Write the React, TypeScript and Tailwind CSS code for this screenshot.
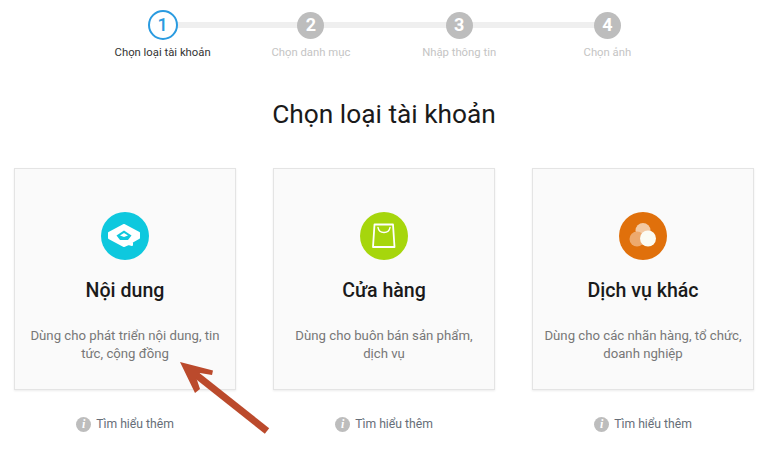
const steps = [
  { n: "1", label: "Chọn loại tài khoản" },
  { n: "2", label: "Chọn danh mục" },
  { n: "3", label: "Nhập thông tin" },
  { n: "4", label: "Chọn ảnh" },
];

function ChatIcon() {
  return (
    <svg width="48" height="48" viewBox="0 0 48 48">
      <path d="M23 13 L38 21 L38 26 L31 30 L31 33 L27.5 32 L23 34 L8 26 L8 21 Z" fill="#fff" stroke="#fff" strokeWidth="2" strokeLinejoin="round" />
      <path d="M23 18.5 L30.5 23.5 L27 28 L19 28 L15.5 23.5 Z" fill="#0ec8de" />
      <path d="M23 21 L27 23.5 L23 25 L19 23.5 Z" fill="#fff" />
    </svg>
  );
}

function BagIcon() {
  return (
    <svg width="48" height="48" viewBox="0 0 48 48" fill="none" stroke="#fff" strokeLinecap="round" strokeLinejoin="round">
      <path d="M14.5 12.5 H33 L34.5 35 H13 Z" strokeWidth="1.8" />
      <path d="M18 15.5 C19 22 29 22 30 15.5" strokeWidth="1.5" />
    </svg>
  );
}

function CirclesIcon() {
  return (
    <svg width="48" height="48" viewBox="0 0 48 48">
      <circle cx="24" cy="18.5" r="7.5" fill="#f3c9a2" />
      <circle cx="18" cy="27" r="7.5" fill="#eda96d" />
      <circle cx="29" cy="26.5" r="8" fill="#fbfbf3" />
    </svg>
  );
}

const cards = [
  { title: "Nội dung", desc: "Dùng cho phát triển nội dung, tin tức, cộng đồng", color: "bg-[#0ec8de]", icon: <ChatIcon /> },
  { title: "Cửa hàng", desc: "Dùng cho buôn bán sản phẩm, dịch vụ", color: "bg-[#a6d60c]", icon: <BagIcon /> },
  { title: "Dịch vụ khác", desc: "Dùng cho các nhãn hàng, tổ chức, doanh nghiệp", color: "bg-[#e0700b]", icon: <CirclesIcon /> },
];

export default function App() {
  return (
    <div className="relative w-[768px] h-[459px] overflow-hidden bg-white font-['Roboto',sans-serif]">
      <div className="relative ml-[88.5px] w-[593px] pt-[10px]">
        <div className="absolute left-[74px] right-[74px] top-[22px] h-[6px] bg-[#efefef]" />
        <div className="relative grid grid-cols-4">
          {steps.map((s, i) => (
            <div key={s.n} className="flex flex-col items-center">
              {i === 0 ? (
                <div className="flex h-[30px] w-[30px] items-center justify-center rounded-full border-2 border-[#2a9be0] bg-white text-[18px] leading-none font-medium text-[#2a9be0]">
                  {s.n}
                </div>
              ) : (
                <div className="my-[1.5px] flex h-[27px] w-[27px] items-center justify-center rounded-full bg-[#bdbdbd] text-[18px] leading-none font-bold text-white">
                  {s.n}
                </div>
              )}
              <div className={`mt-[4px] text-[11.3px] leading-[18px] ${i === 0 ? "text-[#333333]" : "text-[#c4c4c4]"}`}>
                {s.label}
              </div>
            </div>
          ))}
        </div>
      </div>

      <h1 className="mt-[35px] text-center text-[26.3px] leading-[34px] font-normal text-[#1a1a1a]">Chọn loại tài khoản</h1>

      <div className="mt-[37px] grid grid-cols-3 gap-[37px] px-[14px]">
        {cards.map((c) => (
          <div key={c.title} className="flex flex-col items-center">
            <div className="flex h-[222px] w-[222px] flex-col items-center border border-[#e4e4e4] bg-[#fafafa] pt-[43px] shadow-[0_1px_2px_rgba(0,0,0,0.08)]">
              <div className={`flex h-[48px] w-[48px] items-center justify-center rounded-full ${c.color}`}>{c.icon}</div>
              <div className="mt-[17px] text-[19.6px] leading-[28px] font-medium text-[#1a1a1a]">{c.title}</div>
              <p className="mt-[22px] px-[10px] text-center text-[13.2px] leading-[18px] text-[#777777]">{c.desc}</p>
            </div>
            <div className="mt-[25px] flex items-center gap-[5px]">
              <span className="flex h-[15px] w-[15px] items-center justify-center rounded-full bg-[#bdbdbd] font-['Liberation_Serif',serif] text-[12px] leading-none font-bold italic text-white">
                i
              </span>
              <span className="text-[12.2px] leading-[18px] text-[#666e78]">Tìm hiểu thêm</span>
            </div>
          </div>
        ))}
      </div>

      <svg className="absolute left-0 top-0" width="768" height="459" viewBox="0 0 768 459" fill="none">
        <path d="M267 431 L190 370" stroke="#bb4a2c" strokeWidth="7" />
        <path d="M180 362 L213 370.5 L212 375 L200 373 L196 377 L200 389 L195 393 Z" fill="#bb4a2c" />
      </svg>
    </div>
  );
}
